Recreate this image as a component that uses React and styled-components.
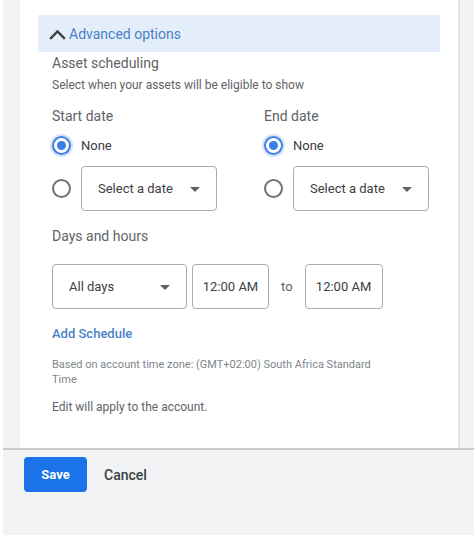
import React from "react";
import styled, { createGlobalStyle } from "styled-components";

const Global = createGlobalStyle`
  html, body { margin: 0; padding: 0; background: #ffffff; }
  body { font-family: Roboto, "Noto Sans", Arial, sans-serif; }
  * { box-sizing: border-box; }
`;

const Page = styled.div`
  height: 535px;
  margin-left: 3px;
  width: 471px;
  background: #f1f3f4;
  display: flex;
  flex-direction: column;
  overflow: hidden;
`;

const Top = styled.div`
  display: flex;
  height: 450px;
  border-bottom: 2px solid #c9cacc;
`;

const Card = styled.div`
  margin-left: 17px;
  width: 438px;
  background: #ffffff;
  padding: 15px 18px 0 18px;
  display: flex;
  flex-direction: column;
`;

const Gutter = styled.div`
  flex: 1;
  background: #f4f4f5;
  border-left: 2px solid #e6e6e8;
`;

const Header = styled.div`
  height: 37px;
  background: #e3eefa;
  display: flex;
  align-items: center;
  padding-left: 11px;
  gap: 3px;
  color: #4b7fc7;
  font-size: 14px;
`;

const Body = styled.div`
  padding: 0 14px;
  display: flex;
  flex-direction: column;
`;

const Title = styled.div`
  font-size: 14px;
  color: #5f6368;
  margin-top: ${p => p.$mt || 0}px;
  line-height: 18px;
`;

const Sub = styled.div`
  font-size: 12px;
  color: #5f6368;
  margin-top: ${p => p.$mt || 0}px;
  line-height: 16px;
`;

const Columns = styled.div`
  display: grid;
  grid-template-columns: 212px 1fr;
  margin-top: 14px;
`;

const Col = styled.div`
  display: flex;
  flex-direction: column;
`;

const RadioRow = styled.div`
  display: flex;
  align-items: center;
  gap: 10px;
  margin-top: ${p => p.$mt || 0}px;
`;

const Radio = styled.span`
  width: 19px;
  height: 19px;
  border-radius: 50%;
  border: 2px solid ${p => (p.$on ? "#3b7de8" : "#737373")};
  display: flex;
  align-items: center;
  justify-content: center;
  box-shadow: ${p => (p.$on ? "0 0 0 2px #d6e4fa" : "none")};
  &::after {
    content: "";
    width: 9px;
    height: 9px;
    border-radius: 50%;
    background: ${p => (p.$on ? "#3b7de8" : "transparent")};
  }
`;

const Label = styled.span`
  font-size: 13px;
  color: #3c4043;
`;

const Box = styled.div`
  width: ${p => p.$w}px;
  height: 45px;
  border: 1px solid #a9abae;
  border-radius: 4px;
  display: flex;
  align-items: center;
  justify-content: ${p => (p.$center ? "center" : "space-between")};
  padding: ${p => (p.$center ? "0" : "0 16px 0 16px")};
  font-size: 13px;
  color: #3c4043;
`;

const Arrow = styled.span`
  width: 0;
  height: 0;
  border-left: 5px solid transparent;
  border-right: 5px solid transparent;
  border-top: 5px solid #5f6368;
  margin-top: 1px;
`;

const TimeRow = styled.div`
  display: flex;
  align-items: center;
  margin-top: 19px;
  gap: 5px;
`;

const To = styled.span`
  font-size: 13px;
  color: #5f6368;
  padding: 0 7px;
`;

const Link = styled.div`
  font-size: 13px;
  font-weight: 500;
  color: #4b7fc7;
  margin-top: 17px;
  line-height: 16px;
`;

const Note = styled.div`
  font-size: 11px;
  color: #80868b;
  line-height: 15px;
  margin-top: 15px;
`;

const Actions = styled.div`
  display: flex;
  align-items: center;
  padding-left: 21px;
  margin-top: 7px;
  gap: 17px;
`;

const SaveBtn = styled.button`
  width: 63px;
  height: 35px;
  border: none;
  border-radius: 4px;
  background: #1a73e8;
  color: #ffffff;
  font-family: inherit;
  font-size: 13px;
  font-weight: 700;
`;

const CancelBtn = styled.span`
  font-size: 14px;
  font-weight: 500;
  color: #3c4043;
`;

function Chevron() {
  return (
    <svg width="17" height="12" viewBox="0 0 17 12">
      <polyline
        points="2,10 8.5,3.5 15,10"
        fill="none"
        stroke="#3c4043"
        strokeWidth="2.4"
        strokeLinecap="square"
      />
    </svg>
  );
}

function DateColumn({ title }) {
  return (
    <Col>
      <Title>{title}</Title>
      <RadioRow $mt={11}>
        <Radio $on />
        <Label>None</Label>
      </RadioRow>
      <RadioRow $mt={11}>
        <Radio />
        <Box $w={136}>
          <span>Select a date</span>
          <Arrow />
        </Box>
      </RadioRow>
    </Col>
  );
}

export default function App() {
  return (
    <>
      <Global />
      <Page>
        <Top>
          <Card>
            <Header>
              <Chevron />
              <span>Advanced options</span>
            </Header>
            <Body>
              <Title $mt={2}>Asset scheduling</Title>
              <Sub $mt={5}>Select when your assets will be eligible to show</Sub>
              <Columns>
                <DateColumn title="Start date" />
                <DateColumn title="End date" />
              </Columns>
              <Title $mt={16}>Days and hours</Title>
              <TimeRow>
                <Box $w={135}>
                  <span>All days</span>
                  <Arrow />
                </Box>
                <Box $w={77} $center>12:00 AM</Box>
                <To>to</To>
                <Box $w={78} $center>12:00 AM</Box>
              </TimeRow>
              <Link>Add Schedule</Link>
              <Note>
                Based on account time zone: (GMT+02:00) South Africa Standard
                <br />
                Time
              </Note>
              <Sub $mt={12}>Edit will apply to the account.</Sub>
            </Body>
          </Card>
          <Gutter />
        </Top>
        <Actions>
          <SaveBtn>Save</SaveBtn>
          <CancelBtn>Cancel</CancelBtn>
        </Actions>
      </Page>
    </>
  );
}
